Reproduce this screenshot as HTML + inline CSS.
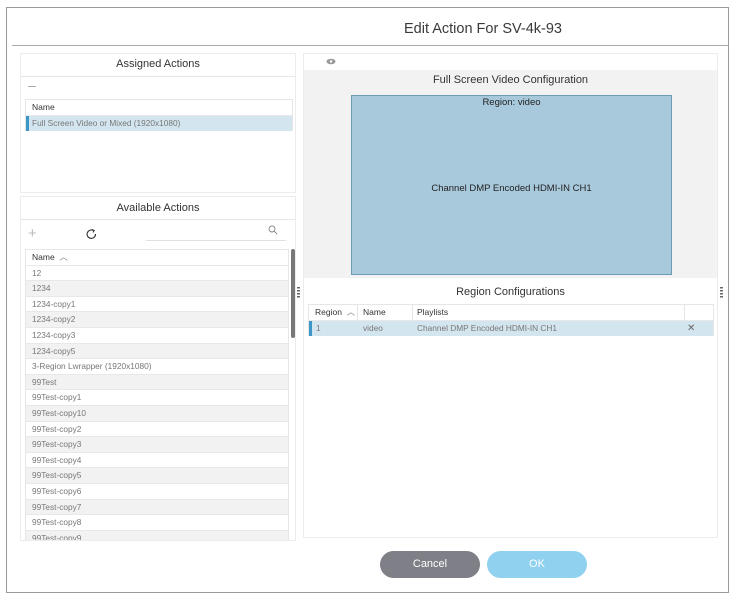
<!DOCTYPE html>
<html><head><style>
*{box-sizing:border-box;margin:0;padding:0}
body{width:737px;height:600px;background:#fff;font-family:"Liberation Sans",sans-serif;position:relative;overflow:hidden;color:#444}
.a{position:absolute}
.modal{left:6px;top:7px;width:723px;height:586px;border:1px solid #9a9a9a}
.panel{border:1px solid #ececec;background:#fff}
.h{font-size:11px;color:#333;text-align:center;width:100%}
.tbl{font-size:8.3px;color:#777}
.row{height:15.6px;line-height:15.6px;padding-left:6px;border-bottom:1px solid #e8e8e8;white-space:nowrap}
.g{background:#f2f2f2}
.th{color:#333;font-size:8.5px}
.sel{background:#d3e5ee;border-left:3px solid #3d97c6;padding-left:3px}
.dots{width:3px;height:12px;background:repeating-linear-gradient(#666 0 1.5px,transparent 1.5px 3px)}
</style></head><body>
<div class="a modal"></div>
<div class="a" style="left:12px;top:45px;width:717px;height:1px;background:#aaa"></div>
<div class="a" style="left:338px;top:21px;width:290px;text-align:center;font-size:14.5px;color:#3a3a3a">Edit Action For SV-4k-93</div>

<!-- Assigned -->
<div class="a panel" style="left:20px;top:53px;width:276px;height:140px">
 <div class="a h" style="top:4px">Assigned Actions</div>
 <div class="a" style="left:0;top:22px;width:100%;height:1px;background:#e6e6e6"></div>
 <div class="a" style="left:7px;top:32px;width:8px;height:1px;background:#aaa"></div>
 <div class="a tbl" style="left:4px;top:45px;width:268px;border:1px solid #e6e6e6;border-bottom:none">
  <div class="row th">Name</div>
  <div class="row sel" style="border-bottom:none">Full Screen Video or Mixed (1920x1080)</div>
 </div>
</div>

<!-- Available -->
<div class="a panel" style="left:20px;top:196px;width:276px;height:345px;overflow:hidden">
 <div class="a h" style="top:5px">Available Actions</div>
 <div class="a" style="left:0;top:22px;width:100%;height:1px;background:#e6e6e6"></div>
 <div class="a" style="left:7px;top:28px;font-size:15px;color:#bbb;font-weight:300">+</div>
 <svg class="a" style="left:65px;top:32px" width="11" height="11" viewBox="0 0 11 11"><path d="M7.5 1.6A4.2 4.2 0 1 0 9.5 5" fill="none" stroke="#333" stroke-width="1.1"/><path d="M6 0.5L8.2 1.5L7 3.5" fill="none" stroke="#333" stroke-width="1"/></svg>
 <div class="a" style="left:125px;top:43px;width:140px;height:1px;background:#e0e0e0"></div>
 <svg class="a" style="left:247px;top:28px" width="10" height="10" viewBox="0 0 10 10"><circle cx="4" cy="4" r="3" fill="none" stroke="#888" stroke-width=".9"/><path d="M6.2 6.2L9 9" stroke="#888" stroke-width=".9"/></svg>
 <div class="a tbl" style="left:4px;top:52px;width:264px;border:1px solid #e6e6e6;border-bottom:none">
  <div class="row th">Name &nbsp;<span style="color:#888">︿</span></div>
  <div class="row">12</div><div class="row g">1234</div><div class="row">1234-copy1</div><div class="row g">1234-copy2</div><div class="row">1234-copy3</div><div class="row g">1234-copy5</div><div class="row">3-Region Lwrapper (1920x1080)</div><div class="row g">99Test</div><div class="row">99Test-copy1</div><div class="row g">99Test-copy10</div><div class="row">99Test-copy2</div><div class="row g">99Test-copy3</div><div class="row">99Test-copy4</div><div class="row g">99Test-copy5</div><div class="row">99Test-copy6</div><div class="row g">99Test-copy7</div><div class="row">99Test-copy8</div><div class="row g">99Test-copy9</div>
 </div>
 <div class="a" style="left:270px;top:52px;width:4px;height:89px;background:#777;border-radius:2px"></div>
</div>

<div class="a dots" style="left:297px;top:287px"></div>
<div class="a dots" style="left:720px;top:287px"></div>

<!-- Right -->
<div class="a panel" style="left:303px;top:53px;width:415px;height:485px">
 <svg class="a" style="left:22px;top:4px" width="10" height="7" viewBox="0 0 10 7"><ellipse cx="5" cy="3.5" rx="4.5" ry="2.8" fill="#999"/><circle cx="5" cy="3.5" r="1.2" fill="#fff"/></svg>
 <div class="a" style="left:0;top:16px;width:413px;height:208px;background:#f2f2f2"></div>
 <div class="a h" style="top:20px">Full Screen Video Configuration</div>
 <div class="a" style="left:47px;top:41px;width:321px;height:180px;background:#a8c9dc;border:1px solid #6b9bb5">
  <div class="a" style="top:1px;width:100%;text-align:center;font-size:9.5px;color:#222">Region: video</div>
  <div class="a" style="top:87px;width:100%;text-align:center;font-size:9.5px;color:#222">Channel DMP Encoded HDMI-IN CH1</div>
 </div>
 <div class="a h" style="top:232px">Region Configurations</div>
 <div class="a tbl" style="left:4px;top:250px;width:406px;border:1px solid #e6e6e6;border-bottom:none">
  <div class="row th" style="position:relative"><span class="a" style="left:6px">Region &nbsp;<span style="color:#888">︿</span></span><span class="a" style="left:54px">Name</span><span class="a" style="left:108px">Playlists</span>
   <span class="a" style="left:48px;top:0;width:1px;height:15px;background:#e4e4e4"></span><span class="a" style="left:103px;top:0;width:1px;height:15px;background:#e4e4e4"></span><span class="a" style="left:375px;top:0;width:1px;height:15px;background:#e4e4e4"></span></div>
  <div class="row sel" style="position:relative;border-bottom:none"><span class="a" style="left:4px">1</span><span class="a" style="left:51px">video</span><span class="a" style="left:105px">Channel DMP Encoded HDMI-IN CH1</span><span class="a" style="left:375px;font-size:10px;color:#666">✕</span></div>
 </div>
</div>

<div class="a" style="left:380px;top:551px;width:100px;height:27px;border-radius:14px;background:#7e7f87;color:#fff;font-size:11px;text-align:center;line-height:27px">Cancel</div>
<div class="a" style="left:487px;top:551px;width:100px;height:27px;border-radius:14px;background:#8fd1ee;color:#fff;font-size:11px;text-align:center;line-height:27px">OK</div>
</body></html>
